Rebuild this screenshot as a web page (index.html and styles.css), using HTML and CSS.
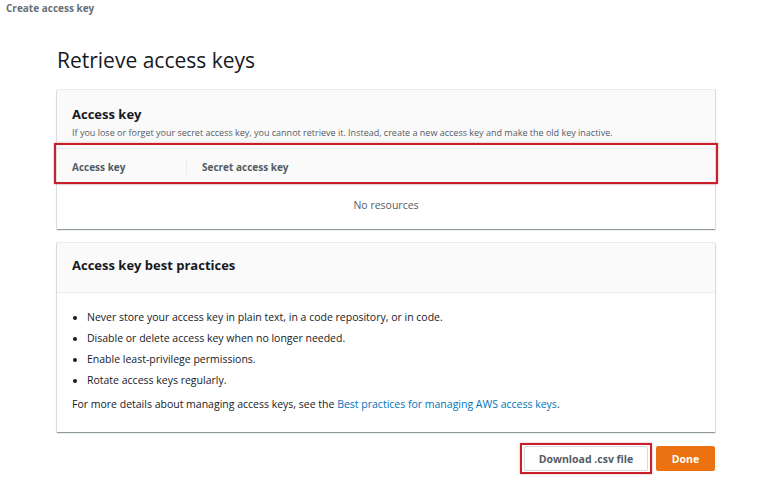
FILE: index.html
```html
<!DOCTYPE html>
<html>
<head>
<meta charset="utf-8">
<link rel="stylesheet" href="styles.css">
</head>
<body>
<div class="crumb">Create access key</div>
<main class="main">
  <h1 class="title">Retrieve access keys</h1>
  <section class="card">
    <div class="card-head">
      <h2 class="card-title">Access key</h2>
      <p class="card-desc">If you lose or forget your secret access key, you cannot retrieve it. Instead, create a new access key and make the old key inactive.</p>
    </div>
    <div class="thead">
      <div class="th th-first">Access key</div>
      <div class="th">Secret access key</div>
      <div class="mark mark-row"></div>
    </div>
    <div class="empty">No resources</div>
  </section>
  <section class="card card-2">
    <div class="card-head2">
      <h2 class="card-title">Access key best practices</h2>
    </div>
    <div class="card-body">
      <ul class="list">
        <li>Never store your access key in plain text, in a code repository, or in code.</li>
        <li>Disable or delete access key when no longer needed.</li>
        <li>Enable least-privilege permissions.</li>
        <li>Rotate access keys regularly.</li>
      </ul>
      <p class="more">For more details about managing access keys, see the <a class="link" href="#">Best practices for managing AWS access keys</a>.</p>
    </div>
  </section>
  <div class="actions">
    <div class="btn-wrap">
      <button class="btn btn-normal">Download .csv file</button>
      <div class="mark mark-btn"></div>
    </div>
    <button class="btn btn-primary">Done</button>
  </div>
</main>
</body>
</html>
```
FILE: styles.css
```css
* { box-sizing: border-box; }
html, body { margin: 0; padding: 0; background: #fff; }
body {
  font-family: "Open Sans", "Noto Sans", sans-serif;
  color: #16191f;
  width: 780px;
  height: 484px;
  overflow: hidden;
}
.crumb {
  font-size: 10px;
  font-weight: 700;
  color: #687078;
  padding: 1px 0 0 6px;
  line-height: 14px;
}
.main {
  margin-left: 57px;
  width: 658px;
}
.title {
  font-size: 21px;
  font-weight: 400;
  line-height: 28px;
  margin: 31px 0 0 0;
  color: #16191f;
}
.card {
  margin-top: 15px;
  background: #fff;
  border-top: 1px solid #eaeded;
  box-shadow: 0 1px 1px 0 rgba(0,28,36,0.3), 1px 1px 1px 0 rgba(0,28,36,0.1), -1px 1px 1px 0 rgba(0,28,36,0.1);
}
.card-head {
  background: #fafafa;
  padding: 13px 15px 8px 15px;
}
.card-title {
  margin: 0;
  font-size: 13px;
  font-weight: 700;
  line-height: 22px;
}
.card-desc {
  margin: 1px 0 0 0;
  font-size: 9px;
  line-height: 14px;
  color: #545b64;
}
.thead {
  position: relative;
  display: flex;
  background: #fafafa;
  border-top: 1px solid #eaeded;
  border-bottom: 1px solid #eaeded;
  height: 37px;
  align-items: center;
}
.th {
  font-size: 10px;
  font-weight: 700;
  color: #545b64;
  padding-left: 15px;
}
.th-first {
  width: 130px;
  border-right: 1px solid #eaeded;
  height: 16px;
  line-height: 16px;
}
.mark {
  position: absolute;
  border: 2px solid #c7202a;
  box-shadow: 0 0 2px rgba(199,32,42,0.4);
  pointer-events: none;
}
.mark-row {
  left: -3px;
  right: -3px;
  top: -6px;
  bottom: 0;
}
.empty {
  height: 44px;
  line-height: 40px;
  text-align: center;
  font-size: 10.5px;
  color: #545b64;
}
.card-2 {
  margin-top: 13px;
}
.card-head2 {
  background: #fafafa;
  border-bottom: 1px solid #eaeded;
  height: 50px;
  padding: 11px 15px 0 15px;
}
.card-body {
  padding: 14px 15px 17px 15px;
}
.list {
  margin: 0;
  padding-left: 15px;
  font-size: 10.5px;
  line-height: 21px;
}
.list li { padding-left: 0; }
.more {
  margin: 3px 0 0 0;
  font-size: 10.5px;
  line-height: 21px;
}
.link {
  color: #0073bb;
  text-decoration: none;
}
.actions {
  display: flex;
  justify-content: flex-end;
  align-items: center;
  gap: 8px;
  margin-top: 14px;
}
.btn-wrap {
  position: relative;
  display: flex;
}
.btn {
  font-family: "Open Sans", "Noto Sans", sans-serif;
  font-size: 10.5px;
  font-weight: 700;
  height: 25px;
  border-radius: 2px;
  cursor: pointer;
}
.btn-normal {
  width: 124px;
  background: #fff;
  color: #545b64;
  border: 1px solid #d5dbdb;
}
.mark-btn {
  left: -4px;
  right: -4px;
  top: -3px;
  bottom: -3px;
}
.btn-primary {
  width: 59px;
  background: #ec7211;
  color: #fff;
  border: 1px solid #ec7211;
}
```
